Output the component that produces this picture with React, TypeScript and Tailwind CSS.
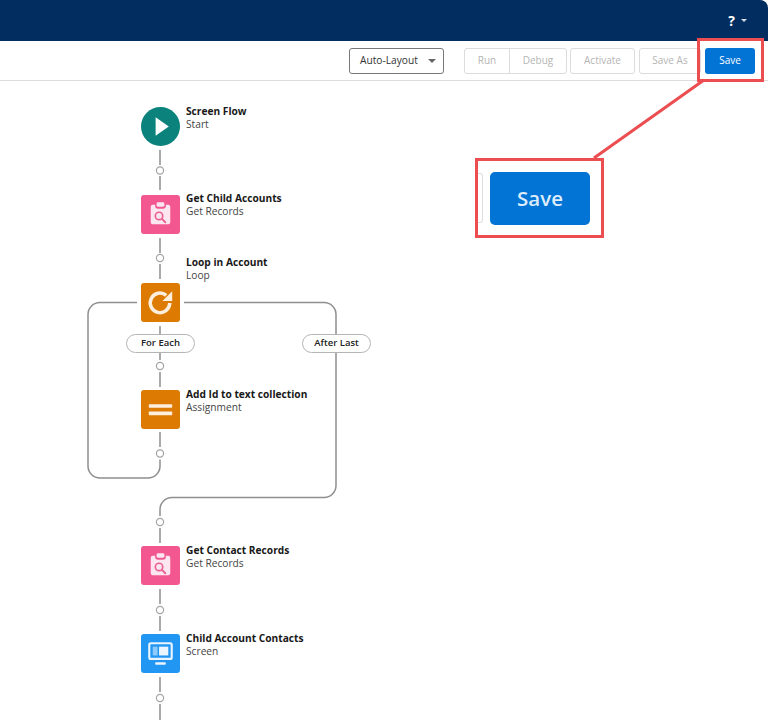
import React from "react";

const font = "font-['Open_Sans',sans-serif]";

const ClipboardIcon = () => (
  <svg viewBox="0 0 40 40" className="w-full h-full">
    <path d="M12 10h2.5v1.5a2.5 2.5 0 0 0 2.5 2.5h6a2.5 2.5 0 0 0 2.5-2.5V10H28a2 2 0 0 1 2 2v16a2 2 0 0 1-2 2H12a2 2 0 0 1-2-2V12a2 2 0 0 1 2-2z" fill="#fde6ef" />
    <rect x="16" y="7.5" width="8" height="4.5" rx="1.5" fill="#fde6ef" />
    <circle cx="18.5" cy="21.5" r="3.8" fill="none" stroke="#e8628f" strokeWidth="1.7" />
    <path d="M21.5 24.5l3.4 3.4" stroke="#e8628f" strokeWidth="2" strokeLinecap="round" />
  </svg>
);

const LoopIcon = () => (
  <svg viewBox="0 0 40 40" className="w-full h-full">
    <path d="M29.5 20.5a10 10 0 1 1-3.6-7.8" fill="none" stroke="#fdeedd" strokeWidth="3.6" />
    <path d="M32 8.5v10h-10z" fill="#fdeedd" />
  </svg>
);

const AssignIcon = () => (
  <svg viewBox="0 0 40 40" className="w-full h-full">
    <rect x="8" y="14.5" width="24" height="3.8" rx="0.8" fill="#fdeedd" />
    <rect x="8" y="22" width="24" height="3.8" rx="0.8" fill="#fdeedd" />
  </svg>
);

const ScreenIcon = () => (
  <svg viewBox="0 0 40 40" className="w-full h-full">
    <rect x="8.5" y="9.5" width="23" height="16" rx="1.5" fill="none" stroke="#eaf5ff" strokeWidth="2.2" />
    <rect x="12" y="13" width="5" height="9" fill="#eaf5ff" opacity="0.55" />
    <rect x="18.5" y="13" width="9.5" height="9" fill="#eaf5ff" />
    <rect x="14.5" y="29" width="11" height="2.6" rx="1" fill="#eaf5ff" />
  </svg>
);

const Box = ({ className, children }: { className: string; children: React.ReactNode }) => (
  <div className={`absolute left-[141px] w-[39px] h-[39px] rounded-[3px] ${className}`}>{children}</div>
);

const Label = ({ className, title, sub }: { className: string; title: string; sub: string }) => (
  <div className={`absolute left-[186px] text-[10.2px] leading-[13px] whitespace-nowrap ${className}`}>
    <p className="font-bold text-[#181818]">{title}</p>
    <p className="text-[#444]">{sub}</p>
  </div>
);

const Pill = ({ className, text }: { className: string; text: string }) => (
  <div className={`absolute top-[253px] w-[69px] h-[19px] flex items-center justify-center rounded-full border border-[#b5b5b5] bg-white text-[9.5px] font-semibold text-[#222] ${className}`}>
    {text}
  </div>
);

const circles = [170.5, 258, 366, 453.5, 522, 610, 698];

const Connectors = () => (
  <svg className="absolute inset-0 w-[768px] h-[639px]" viewBox="0 81 768 639" fill="none">
    <g stroke="#8f8f8f" strokeWidth="1.5">
      <path d="M160 150V165M160 176V190M160 238V253M160 264V279M160 326V334M160 352V360M160 372V387M160 432V447M160 528V543M160 589V604M160 616V631M160 677V692M160 704V720" />
      <path d="M137 302.5H100a12 12 0 0 0-12 12V466a12 12 0 0 0 12 12H148a12 12 0 0 0 12-12V459.5" />
      <path d="M184 302.5H324a12 12 0 0 1 12 12V485.5a12 12 0 0 1-12 12H172a12 12 0 0 0-12 12V516" />
    </g>
    {circles.map((y) => (
      <circle key={y} cx="160" cy={y} r="3.6" fill="#fff" stroke="#a3a3a3" strokeWidth="1.2" />
    ))}
  </svg>
);

const ToolButton = ({ className, children }: { className: string; children: React.ReactNode }) => (
  <button className={`h-[26px] flex items-center justify-center text-[10px] text-[#b5b5b5] bg-white border border-[#dcdcdc] ${className}`}>
    {children}
  </button>
);

export default function App() {
  return (
    <div className={`relative w-[768px] h-[720px] overflow-hidden bg-white ${font}`}>
      <header className="h-[41px] bg-[#012d60] rounded-tr-lg flex items-center justify-end pr-[21px] gap-[6px] text-white">
        <span className="text-[14px] font-bold leading-none">?</span>
        <span className="w-0 h-0 border-x-[3px] border-x-transparent border-t-[3px] border-t-[#d8e0ea]" />
      </header>

      <div className="h-[40px] border-b border-[#dddddd] flex items-center pl-[349px]">
        <button className="w-[95px] h-[26px] flex items-center justify-between pl-[10px] pr-[7px] rounded-[3px] border border-[#777] text-[10.2px] text-[#333]">
          Auto-Layout
          <span className="w-0 h-0 border-x-[4.5px] border-x-transparent border-t-[4.5px] border-t-[#666]" />
        </button>
        <div className="flex ml-[20px]">
          <ToolButton className="w-[46px] rounded-l-[3px]">Run</ToolButton>
          <ToolButton className="w-[58px] -ml-px rounded-r-[3px]">Debug</ToolButton>
        </div>
        <ToolButton className="w-[65px] ml-[3px] rounded-[3px]">Activate</ToolButton>
        <ToolButton className="w-[62px] ml-[4px] rounded-[3px]">Save As</ToolButton>
        <button className="w-[50px] h-[26px] ml-[4px] rounded-[3px] bg-[#0274d6] text-white text-[10px]">Save</button>
      </div>

      <main className="relative h-[639px]">
        <Connectors />

        <div className="absolute left-[141px] top-[26px] w-[39px] h-[39px] rounded-full bg-[#0b827c]">
          <svg viewBox="0 0 40 40" className="w-full h-full">
            <path d="M15 10.5l13.5 9.5L15 29.5z" fill="#fdfefe" />
          </svg>
        </div>
        <Label className="top-[24px]" title="Screen Flow" sub="Start" />

        <Box className="top-[114px] bg-[#f2588f]"><ClipboardIcon /></Box>
        <Label className="top-[111px]" title="Get Child Accounts" sub="Get Records" />

        <Box className="top-[202px] bg-[#dd7a01]"><LoopIcon /></Box>
        <Label className="top-[175px]" title="Loop in Account" sub="Loop" />

        <Pill className="left-[126px]" text="For Each" />
        <Pill className="left-[302px]" text="After Last" />

        <Box className="top-[309px] bg-[#dd7a01]"><AssignIcon /></Box>
        <Label className="top-[307px]" title="Add Id to text collection" sub="Assignment" />

        <Box className="top-[465px] bg-[#f2588f]"><ClipboardIcon /></Box>
        <Label className="top-[463px]" title="Get Contact Records" sub="Get Records" />

        <Box className="top-[553px] bg-[#2196f3]"><ScreenIcon /></Box>
        <Label className="top-[551px]" title="Child Account Contacts" sub="Screen" />
      </main>

      {/* callout over the toolbar */}
      <svg className="absolute inset-0 w-[768px] h-[720px] pointer-events-none" viewBox="0 0 768 720" fill="none">
        <path d="M704 80L594 158" stroke="#eb4d50" strokeWidth="3" />
      </svg>
      <div className="absolute left-[697px] top-[38px] w-[67px] h-[44px] border-[3px] border-[#eb4d50]" />
      <div className="absolute left-[475px] top-[158px] w-[129px] h-[80px] border-[3px] border-[#eb4d50] bg-white flex items-center">
        <span className="w-[5px] h-[50px] border-r border-y border-[#dddddd] rounded-r-[3px]" />
        <button className="w-[100px] h-[53px] ml-[7px] rounded-[5px] bg-[#0274d6] text-[#dcecfa] text-[20.5px] font-semibold">Save</button>
      </div>
    </div>
  );
}
